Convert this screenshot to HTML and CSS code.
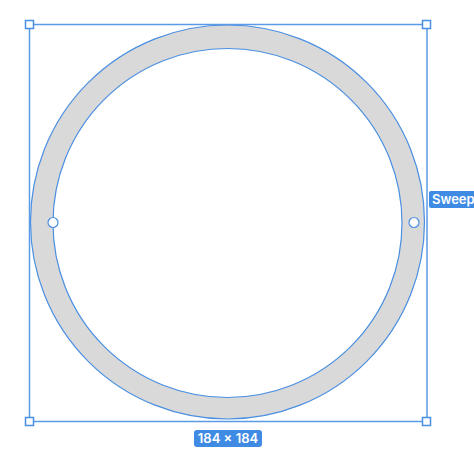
FILE: index.html
```html
<!DOCTYPE html>
<html>
<head>
<meta charset="utf-8">
<link rel="stylesheet" href="styles.css">
</head>
<body>
<div class="canvas">
  <svg class="art" width="474" height="450" viewBox="0 0 474 450" xmlns="http://www.w3.org/2000/svg">
    <path class="ring" fill-rule="evenodd" d="M30.5 222a197 197 0 1 0 394 0a197 197 0 1 0 -394 0Z M53 223a174.5 174.5 0 1 0 349 0a174.5 174.5 0 1 0 -349 0Z"/>
    <rect class="box" x="29.5" y="24.5" width="397.5" height="397"/>
    <rect class="handle" x="25.5" y="20.5" width="8" height="8"/>
    <rect class="handle" x="422.5" y="20.5" width="8" height="8"/>
    <rect class="handle" x="25.5" y="417.5" width="8" height="8"/>
    <rect class="handle" x="422.5" y="417.5" width="8" height="8"/>
    <circle class="knob" cx="53" cy="222.5" r="5"/>
    <circle class="knob" cx="414" cy="222.5" r="5"/>
  </svg>
  <div class="tag sweep">Sweep</div>
  <div class="tag size">184 × 184</div>
</div>
</body>
</html>
```
FILE: styles.css
```css
html, body {
  margin: 0;
  padding: 0;
  background: #ffffff;
  overflow: hidden;
}
.canvas {
  position: relative;
  width: 474px;
  height: 450px;
  overflow: hidden;
  font-family: Inter, "Liberation Sans", sans-serif;
}
.art {
  display: block;
}
.ring {
  fill: #d9d9d9;
  stroke: #4a8fe2;
  stroke-width: 1.2;
}
.box {
  fill: none;
  stroke: #5b9ae6;
  stroke-width: 1.5;
}
.handle {
  fill: #ffffff;
  stroke: #4a8fe2;
  stroke-width: 1.5;
}
.knob {
  fill: #ffffff;
  stroke: #4a8fe2;
  stroke-width: 1.2;
}
.tag {
  position: absolute;
  background: #3f8be4;
  color: #ffffff;
  font-size: 13px;
  font-weight: 600;
  height: 17px;
  line-height: 17px;
  white-space: nowrap;
}
.sweep {
  left: 429px;
  top: 191px;
  padding: 0 12px 0 3px;
  border-radius: 2px 0 0 2px;
}
.size {
  left: 194px;
  top: 430px;
  width: 68px;
  text-align: center;
  border-radius: 3px;
}
```
